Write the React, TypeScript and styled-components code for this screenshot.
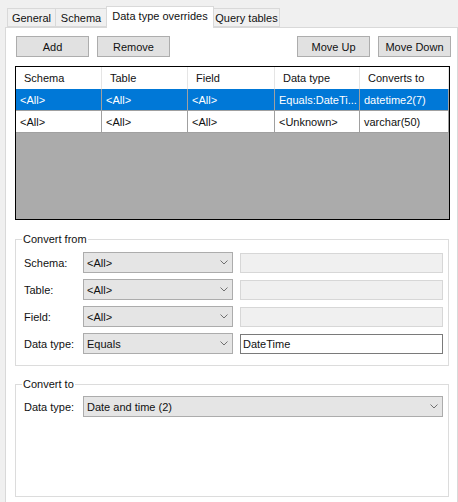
import React from 'react';
import styled, { createGlobalStyle } from 'styled-components';

const GlobalStyle = createGlobalStyle`
  html, body {
    margin: 0;
    padding: 0;
    background: #f0f0f0;
  }
  * {
    box-sizing: border-box;
  }
`;

const TABS = [
  { label: 'General', width: 49 },
  { label: 'Schema', width: 52 },
  { label: 'Data type overrides', width: 108, active: true },
  { label: 'Query tables', width: 67 },
];

const COLUMNS = ['Schema', 'Table', 'Field', 'Data type', 'Converts to'];

const ROWS = [
  { cells: ['<All>', '<All>', '<All>', 'Equals:DateTi...', 'datetime2(7)'], selected: true },
  { cells: ['<All>', '<All>', '<All>', '<Unknown>', 'varchar(50)'], selected: false },
];

const Chevron: React.FC = () => (
  <svg width="8" height="5" viewBox="0 0 8 5">
    <polyline points="0.5,0.5 4,4 7.5,0.5" fill="none" stroke="#707070" strokeWidth="1" />
  </svg>
);

const App: React.FC = () => {
  return (
    <Window>
      <GlobalStyle />
      <TabStrip>
        {TABS.map(tab => (
          <Tab key={tab.label} $width={tab.width} $active={!!tab.active}>
            {tab.label}
          </Tab>
        ))}
      </TabStrip>
      <TabPage>
        <ButtonRow>
          <Button>Add</Button>
          <Button>Remove</Button>
          <Spacer />
          <Button>Move Up</Button>
          <Button>Move Down</Button>
        </ButtonRow>

        <Grid>
          <GridRows>
            {COLUMNS.map(col => (
              <HeaderCell key={col}>{col}</HeaderCell>
            ))}
            {ROWS.map((row, r) =>
              row.cells.map((cell, c) => (
                <Cell key={`${r}-${c}`} $selected={row.selected}>
                  {cell}
                </Cell>
              ))
            )}
          </GridRows>
        </Grid>

        <GroupBox>
          <Legend>Convert from</Legend>
          <FieldRow>
            <FieldLabel>Schema:</FieldLabel>
            <Combo $width={150}>
              <span>&lt;All&gt;</span>
              <Chevron />
            </Combo>
            <TextBox $disabled />
          </FieldRow>
          <FieldRow>
            <FieldLabel>Table:</FieldLabel>
            <Combo $width={150}>
              <span>&lt;All&gt;</span>
              <Chevron />
            </Combo>
            <TextBox $disabled />
          </FieldRow>
          <FieldRow>
            <FieldLabel>Field:</FieldLabel>
            <Combo $width={150}>
              <span>&lt;All&gt;</span>
              <Chevron />
            </Combo>
            <TextBox $disabled />
          </FieldRow>
          <FieldRow>
            <FieldLabel>Data type:</FieldLabel>
            <Combo $width={150}>
              <span>Equals</span>
              <Chevron />
            </Combo>
            <TextBox>DateTime</TextBox>
          </FieldRow>
        </GroupBox>

        <GroupBox $height={120} $second>
          <Legend>Convert to</Legend>
          <FieldRow>
            <FieldLabel>Data type:</FieldLabel>
            <Combo $grow>
              <span>Date and time (2)</span>
              <Chevron />
            </Combo>
          </FieldRow>
        </GroupBox>
      </TabPage>
    </Window>
  );
};

export default App;

// Elements

const Window = styled.div`
  width: 458px;
  height: 502px;
  overflow: hidden;
  display: flex;
  flex-direction: column;
  padding: 6px 0 0 5px;
  background: #f0f0f0;
  font-family: 'Segoe UI', 'Liberation Sans', Arial, sans-serif;
  font-size: 11px;
  color: #111;
`;

const TabStrip = styled.div`
  display: flex;
  align-items: flex-end;
  height: 21px;
  padding-left: 2px;
`;

const Tab = styled.div<{ $width: number; $active: boolean }>`
  position: relative;
  width: ${({ $width }) => $width}px;
  height: ${({ $active }) => ($active ? 22 : 19)}px;
  margin: 0 0 ${({ $active }) => ($active ? -1 : 0)}px -1px;
  display: flex;
  align-items: center;
  justify-content: center;
  padding-bottom: ${({ $active }) => ($active ? 3 : 0)}px;
  background: ${({ $active }) => ($active ? '#fff' : '#f0f0f0')};
  border: 1px solid #d9d9d9;
  border-bottom: ${({ $active }) => ($active ? 'none' : '1px solid #d9d9d9')};
  z-index: ${({ $active }) => ($active ? 1 : 0)};
  white-space: nowrap;

  &:first-child {
    margin-left: 0;
  }
`;

const TabPage = styled.div`
  flex: 1 1 auto;
  display: flex;
  flex-direction: column;
  background: #fff;
  border: 1px solid #d9d9d9;
  border-bottom: none;
  padding: 8px 6px 0 9px;
`;

const ButtonRow = styled.div`
  display: flex;
  gap: 8px;
  padding-left: 1px;
`;

const Spacer = styled.div`
  flex: 1 1 auto;
`;

const Button = styled.div`
  width: 73px;
  height: 21px;
  display: flex;
  align-items: center;
  justify-content: center;
  background: #e1e1e1;
  border: 1px solid #adadad;
`;

const Grid = styled.div`
  margin: 9px 1px 0 0;
  height: 154px;
  border: 1px solid #000;
  background: #ababab;
`;

const GridRows = styled.div`
  display: grid;
  grid-template-columns: 86px 86px 87px 85px 1fr;
  grid-auto-rows: 22px;
`;

const HeaderCell = styled.div`
  display: flex;
  align-items: center;
  padding-left: 8px;
  background: #fff;
  border-right: 1px solid #e5e5e5;
  white-space: nowrap;
`;

const Cell = styled.div<{ $selected: boolean }>`
  display: flex;
  align-items: center;
  padding-left: 4px;
  overflow: hidden;
  white-space: nowrap;
  background: ${({ $selected }) => ($selected ? '#0078d7' : '#fff')};
  color: ${({ $selected }) => ($selected ? '#fff' : '#111')};
  border-right: 1px solid #a0a0a0;
  border-bottom: 1px solid #a0a0a0;
`;

const GroupBox = styled.fieldset<{ $height?: number; $second?: boolean }>`
  margin: ${({ $second }) => ($second ? 11 : 12)}px 2px 0 0;
  padding: ${({ $second }) => ($second ? 4 : 5)}px 5px 11px 8px;
  border: 1px solid #dcdcdc;
  min-width: 0;
  ${({ $height }) => ($height ? `height: ${$height}px;` : '')}
`;

const Legend = styled.legend`
  margin-left: -2px;
  padding: 0 1px;
  line-height: 15px;
`;

const FieldRow = styled.div`
  display: flex;
  align-items: center;
  height: 21px;
  margin-bottom: 6px;

  &:last-child {
    margin-bottom: 0;
  }
`;

const FieldLabel = styled.div`
  width: 59px;
  flex: 0 0 auto;
`;

const Combo = styled.div<{ $width?: number; $grow?: boolean }>`
  ${({ $width }) => ($width ? `width: ${$width}px;` : '')}
  ${({ $grow }) => ($grow ? 'flex: 1 1 auto;' : 'flex: 0 0 auto;')}
  height: 21px;
  display: flex;
  align-items: center;
  justify-content: space-between;
  padding: 0 4px 0 3px;
  background: #e5e5e5;
  border: 1px solid #acacac;
`;

const TextBox = styled.div<{ $disabled?: boolean }>`
  flex: 1 1 auto;
  height: 20px;
  margin-left: 7px;
  display: flex;
  align-items: center;
  padding-left: 2px;
  background: ${({ $disabled }) => ($disabled ? '#f0f0f0' : '#fff')};
  border: 1px solid ${({ $disabled }) => ($disabled ? '#d7d7d7' : '#7a7a7a')};
`;
